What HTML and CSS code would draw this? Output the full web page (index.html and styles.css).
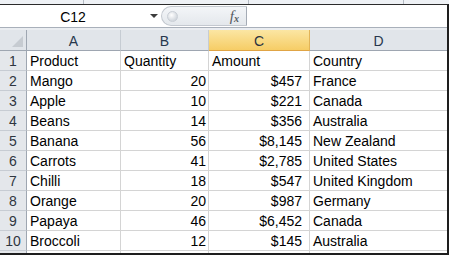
FILE: index.html
```html
<!DOCTYPE html>
<html lang="en">
<head>
  <meta charset="UTF-8">
  <title>Sheet1</title>
  <link rel="stylesheet" href="styles.css">
</head>
<body>

<div class="ribbon-edge">
  <div class="ribbon-group g1"></div>
  <div class="ribbon-group g2"></div>
  <div class="ribbon-group g3"></div>
  <div class="ribbon-group"></div>
</div>

<div class="window">
  <div class="formula-bar">
    <div class="name-box">
      <span class="name">C12</span>
      <span class="caret"></span>
    </div>
    <div class="fx-zone">
      <span class="knob"></span>
      <span class="fx"><i>f</i><sub>x</sub></span>
    </div>
    <div class="formula-input"></div>
  </div>

  <div class="bar-gap"></div>

  <div class="grid">
    <div class="hd corner"><span class="tri"></span></div>
    <div class="hd col">A</div>
    <div class="hd col">B</div>
    <div class="hd col active">C</div>
    <div class="hd col last">D</div>

    <div class="hd row">1</div>
    <div class="cell">Product</div>
    <div class="cell">Quantity</div>
    <div class="cell">Amount</div>
    <div class="cell last">Country</div>

    <div class="hd row">2</div>
    <div class="cell">Mango</div>
    <div class="cell num">20</div>
    <div class="cell money">$457</div>
    <div class="cell last">France</div>

    <div class="hd row">3</div>
    <div class="cell">Apple</div>
    <div class="cell num">10</div>
    <div class="cell money">$221</div>
    <div class="cell last">Canada</div>

    <div class="hd row">4</div>
    <div class="cell">Beans</div>
    <div class="cell num">14</div>
    <div class="cell money">$356</div>
    <div class="cell last">Australia</div>

    <div class="hd row">5</div>
    <div class="cell">Banana</div>
    <div class="cell num">56</div>
    <div class="cell money">$8,145</div>
    <div class="cell last">New Zealand</div>

    <div class="hd row">6</div>
    <div class="cell">Carrots</div>
    <div class="cell num">41</div>
    <div class="cell money">$2,785</div>
    <div class="cell last">United States</div>

    <div class="hd row">7</div>
    <div class="cell">Chilli</div>
    <div class="cell num">18</div>
    <div class="cell money">$547</div>
    <div class="cell last">United Kingdom</div>

    <div class="hd row">8</div>
    <div class="cell">Orange</div>
    <div class="cell num">20</div>
    <div class="cell money">$987</div>
    <div class="cell last">Germany</div>

    <div class="hd row">9</div>
    <div class="cell">Papaya</div>
    <div class="cell num">46</div>
    <div class="cell money">$6,452</div>
    <div class="cell last">Canada</div>

    <div class="hd row">10</div>
    <div class="cell">Broccoli</div>
    <div class="cell num">12</div>
    <div class="cell money">$145</div>
    <div class="cell last">Australia</div>

    <div class="hd row stub"></div>
    <div class="cell stub"></div>
    <div class="cell stub"></div>
    <div class="cell stub"></div>
    <div class="cell stub last"></div>
  </div>
</div>

</body>
</html>
```

FILE: styles.css
```css
*, *:before, *:after {
  box-sizing: border-box;
}

body {
  margin: 0;
  width: 450px;
  height: 255px;
  overflow: hidden;
  background: #ffffff;
  font-family: "Liberation Sans", Arial, sans-serif;
  font-size: 14px;
  color: #000000;
}

/* strip of the ribbon that shows above the frame */
.ribbon-edge {
  display: flex;
  height: 4px;
  width: 449px;
  background: #eef1f5;
}

.ribbon-group {
  border-right: 1px solid #b4bac3;
}

.ribbon-group.g1 { width: 84px; }
.ribbon-group.g2 { width: 165px; }
.ribbon-group.g3 { width: 155px; }
.ribbon-group:last-child { flex: 1; border-right: none; }

.window {
  width: 449px;
  border-top: 1px solid #2b2b2b;
  border-right: 2px solid #1e1e1e;
  border-bottom: 2px solid #1e1e1e;
  background: #ffffff;
}

/* name box + formula bar */
.formula-bar {
  display: flex;
  height: 23px;
  border-bottom: 1px solid #a9b0ba;
  background: #ffffff;
}

.name-box {
  width: 161px;
  display: flex;
  align-items: center;
}

.name {
  width: 146px;
  text-align: center;
  padding-top: 1px;
}

.caret {
  width: 0;
  height: 0;
  margin-left: 4px;
  border-left: 4px solid transparent;
  border-right: 4px solid transparent;
  border-top: 4px solid #3c3c3c;
}

.fx-zone {
  width: 86px;
  margin: 1px 0 1px 0;
  display: flex;
  align-items: center;
  justify-content: space-between;
  padding: 0 7px 0 5px;
  border: 1px solid #c3c8cf;
  border-right-color: #a4abb5;
  border-radius: 11px 0 0 11px;
  background: linear-gradient(to bottom, #f3f5f8, #e4e8ec);
}

.knob {
  width: 11px;
  height: 11px;
  border-radius: 50%;
  border: 1px solid #c9ced5;
  background: radial-gradient(circle at 40% 35%, #ffffff, #d3d8de 70%);
}

.fx {
  font-family: "Liberation Serif", "Times New Roman", serif;
  font-size: 15px;
  color: #555a60;
  line-height: 1;
}

.fx sub {
  font-size: 10px;
  font-style: italic;
  font-weight: bold;
  vertical-align: -1px;
}

.formula-input {
  flex: 1;
  background: #ffffff;
}

.bar-gap {
  height: 2px;
  background: #eaedf1;
}

/* sheet grid */
.grid {
  display: grid;
  grid-template-columns: 27px 94px 88px 101px 137px;
  grid-template-rows: 21px repeat(10, 20px) 2px;
}

.hd {
  background: #e1e5ea;
  color: #27374d;
  display: flex;
  align-items: center;
  justify-content: center;
  border-right: 1px solid #c3c9d1;
  border-bottom: 1px solid #c3c9d1;
}

.hd.col {
  border-bottom-color: #9ea6b1;
  border-right-color: #c6ccd3;
  padding-top: 1px;
}

.hd.col.last {
  border-right: none;
}

.hd.active {
  background: linear-gradient(to bottom, #fbe6a3, #f6cd66);
  border-right-color: #e2b457;
  border-bottom-color: #e0a445;
  color: #2b3340;
}

.corner {
  border-right-color: #9ea6b1;
  border-bottom-color: #9ea6b1;
  justify-content: flex-end;
  align-items: flex-end;
  padding: 0 3px 3px 0;
}

.tri {
  width: 0;
  height: 0;
  border-left: 11px solid transparent;
  border-bottom: 11px solid #c6cbd1;
}

.hd.row {
  background: #e4e7eb;
  border-right-color: #9ea6b1;
  border-bottom-color: #c7ccd3;
  color: #2f3640;
}

.cell {
  display: flex;
  align-items: center;
  padding: 1px 3px 0 3px;
  border-right: 1px solid #d4d4d4;
  border-bottom: 1px solid #d4d4d4;
  white-space: nowrap;
}

.cell.last {
  border-right: none;
}

.cell.num {
  justify-content: flex-end;
  padding-right: 2px;
}

.cell.money {
  justify-content: flex-end;
  padding-right: 7px;
}

.stub {
  border-bottom: none;
}
```
